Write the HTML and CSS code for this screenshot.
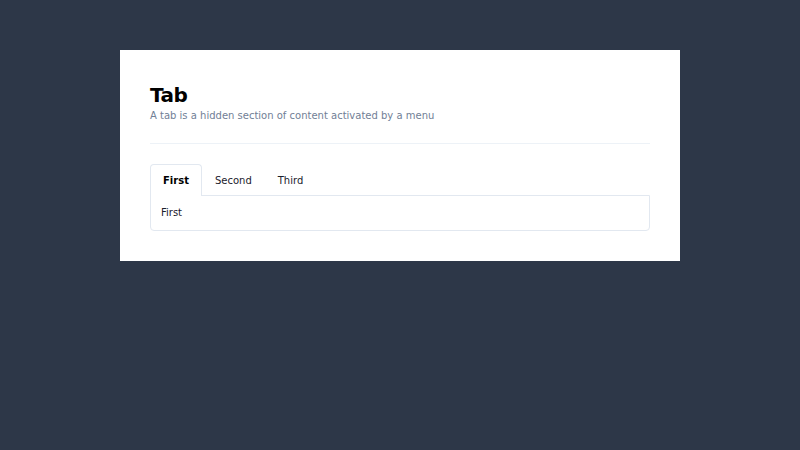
FILE: index.html
```html
<!DOCTYPE html>
<html>
<head>
<meta charset="utf-8">
<link rel="stylesheet" href="styles.css">
</head>
<body>
<div class="card">
  <div class="header">
    <h1 class="title">Tab</h1>
    <p class="subtitle">A tab is a hidden section of content activated by a menu</p>
  </div>
  <div class="divider"></div>
  <div class="tabs">
    <div class="tab-list">
      <div class="tab active">First</div>
      <div class="tab">Second</div>
      <div class="tab">Third</div>
    </div>
    <div class="panel">First</div>
  </div>
</div>
</body>
</html>
```
FILE: styles.css
```css
html, body {
  margin: 0;
  padding: 0;
  background: #2d3748;
  font-family: "DejaVu Sans", sans-serif;
}
.card {
  box-sizing: border-box;
  width: 560px;
  margin: 50px 0 0 120px;
  padding: 30px;
  background: #ffffff;
}
.header {
  padding-top: 1px;
}
.title {
  margin: 0;
  font-size: 20px;
  line-height: 28px;
  font-weight: bold;
  letter-spacing: -0.025em;
  color: #000;
}
.subtitle {
  margin: 0;
  font-size: 10px;
  line-height: 14px;
  color: #718096;
}
.divider {
  margin-top: 20px;
  height: 1px;
  background: #edf2f7;
}
.tabs {
  margin-top: 20px;
}
.tab-list {
  display: flex;
  position: relative;
  margin-bottom: -1px;
}
.tab {
  padding: 0 12px;
  height: 31px;
  line-height: 31px;
  font-size: 10px;
  color: #1a202c;
  border: 1px solid transparent;
  border-bottom: none;
  border-radius: 4px 4px 0 0;
}
.tab.active {
  font-weight: bold;
  color: #000;
  background: #fff;
  border-color: #e2e8f0;
  position: relative;
  z-index: 1;
}
.panel {
  border: 1px solid #e2e8f0;
  border-radius: 0 0 4px 4px;
  padding: 10px 10px;
  font-size: 10px;
  line-height: 14px;
  color: #1a202c;
}
```
